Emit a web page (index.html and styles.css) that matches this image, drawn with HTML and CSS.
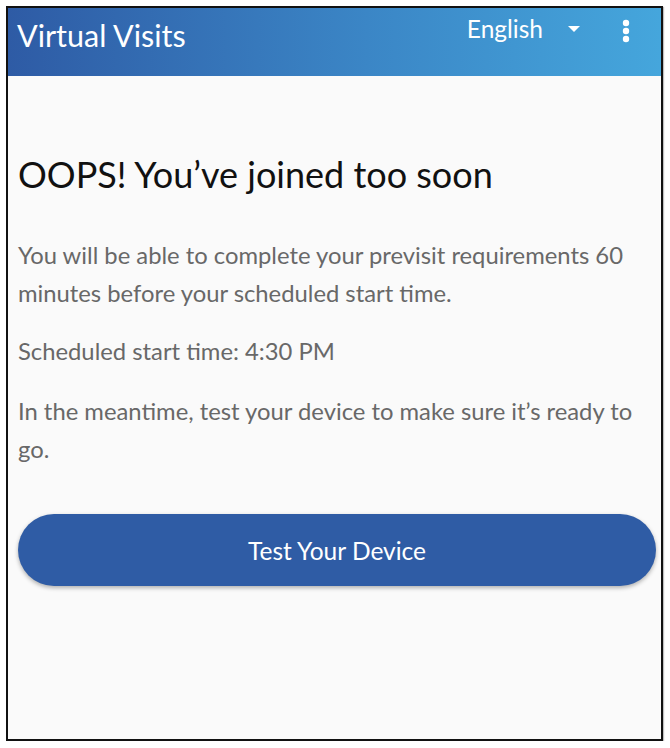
FILE: index.html
```html
<!DOCTYPE html>
<html>
<head>
<meta charset="utf-8">
<link rel="stylesheet" href="styles.css">
</head>
<body>
<div class="frame">
  <header class="topbar">
    <div class="brand">Virtual Visits</div>
    <div class="actions">
      <div class="lang">
        <span class="lang-label">English</span>
        <svg class="caret" width="12" height="6" viewBox="0 0 12 6"><path d="M0 0 L12 0 L6 6 Z" fill="#fff"/></svg>
      </div>
      <svg class="kebab" width="8" height="24" viewBox="0 0 8 24">
        <circle cx="4" cy="4" r="3.2" fill="#fff"/>
        <circle cx="4" cy="12" r="3.2" fill="#fff"/>
        <circle cx="4" cy="20" r="3.2" fill="#fff"/>
      </svg>
    </div>
  </header>
  <main class="content">
    <h1 class="title">OOPS! You’ve joined too soon</h1>
    <p class="text">You will be able to complete your previsit requirements 60 minutes before your scheduled start time.</p>
    <p class="text">Scheduled start time: 4:30 PM</p>
    <p class="text">In the meantime, test your device to make sure it’s ready to go.</p>
    <button class="btn">Test Your Device</button>
  </main>
</div>
</body>
</html>
```

FILE: styles.css
```css
html, body {
  margin: 0;
  padding: 0;
  background: #ffffff;
}
body {
  font-family: Lato, "Open Sans", sans-serif;
}
.frame {
  margin: 6px 0 0 6px;
  width: 653px;
  height: 731px;
  border: 2px solid #111;
  background: #fafafa;
  box-shadow: 1px 1px 1px rgba(0,0,0,0.25);
  display: flex;
  flex-direction: column;
}
.topbar {
  height: 68px;
  flex: none;
  background: linear-gradient(90deg, #2e5ba5 0%, #3b86c6 55%, #45a6dc 100%);
  display: flex;
  align-items: flex-start;
  justify-content: space-between;
  color: #fff;
  box-sizing: border-box;
  padding: 0 0 0 9px;
}
.brand {
  font-size: 30.5px;
  line-height: 36px;
  margin-top: 9px;
}
.actions {
  display: flex;
  align-items: flex-start;
}
.lang {
  display: flex;
  align-items: flex-start;
  margin-top: 6px;
}
.lang-label {
  font-size: 24.5px;
  line-height: 30px;
}
.caret {
  margin: 12px 0 0 25px;
}
.kebab {
  margin: 11px 31px 0 42px;
}
.content {
  padding: 0 5px 0 10px;
}
.title {
  font-weight: 400;
  font-size: 36px;
  color: #111;
  margin: 74px 0 0 0;
  line-height: 48px;
}
.text {
  font-size: 23.8px;
  color: #686868;
  line-height: 38px;
  margin: 0;
}
.title + .text { margin-top: 38px; }
.text + .text { margin-top: 20px; }
.text + .text + .text { margin-top: 22px; }
.btn {
  display: block;
  width: 638px;
  height: 72px;
  margin-top: 46px;
  border: none;
  border-radius: 36px;
  background: #2f5ca5;
  color: #fff;
  font-family: Lato, "Open Sans", sans-serif;
  font-size: 24.5px;
  box-shadow: 0 2px 4px rgba(0,0,0,0.3);
  padding: 0;
}
```
